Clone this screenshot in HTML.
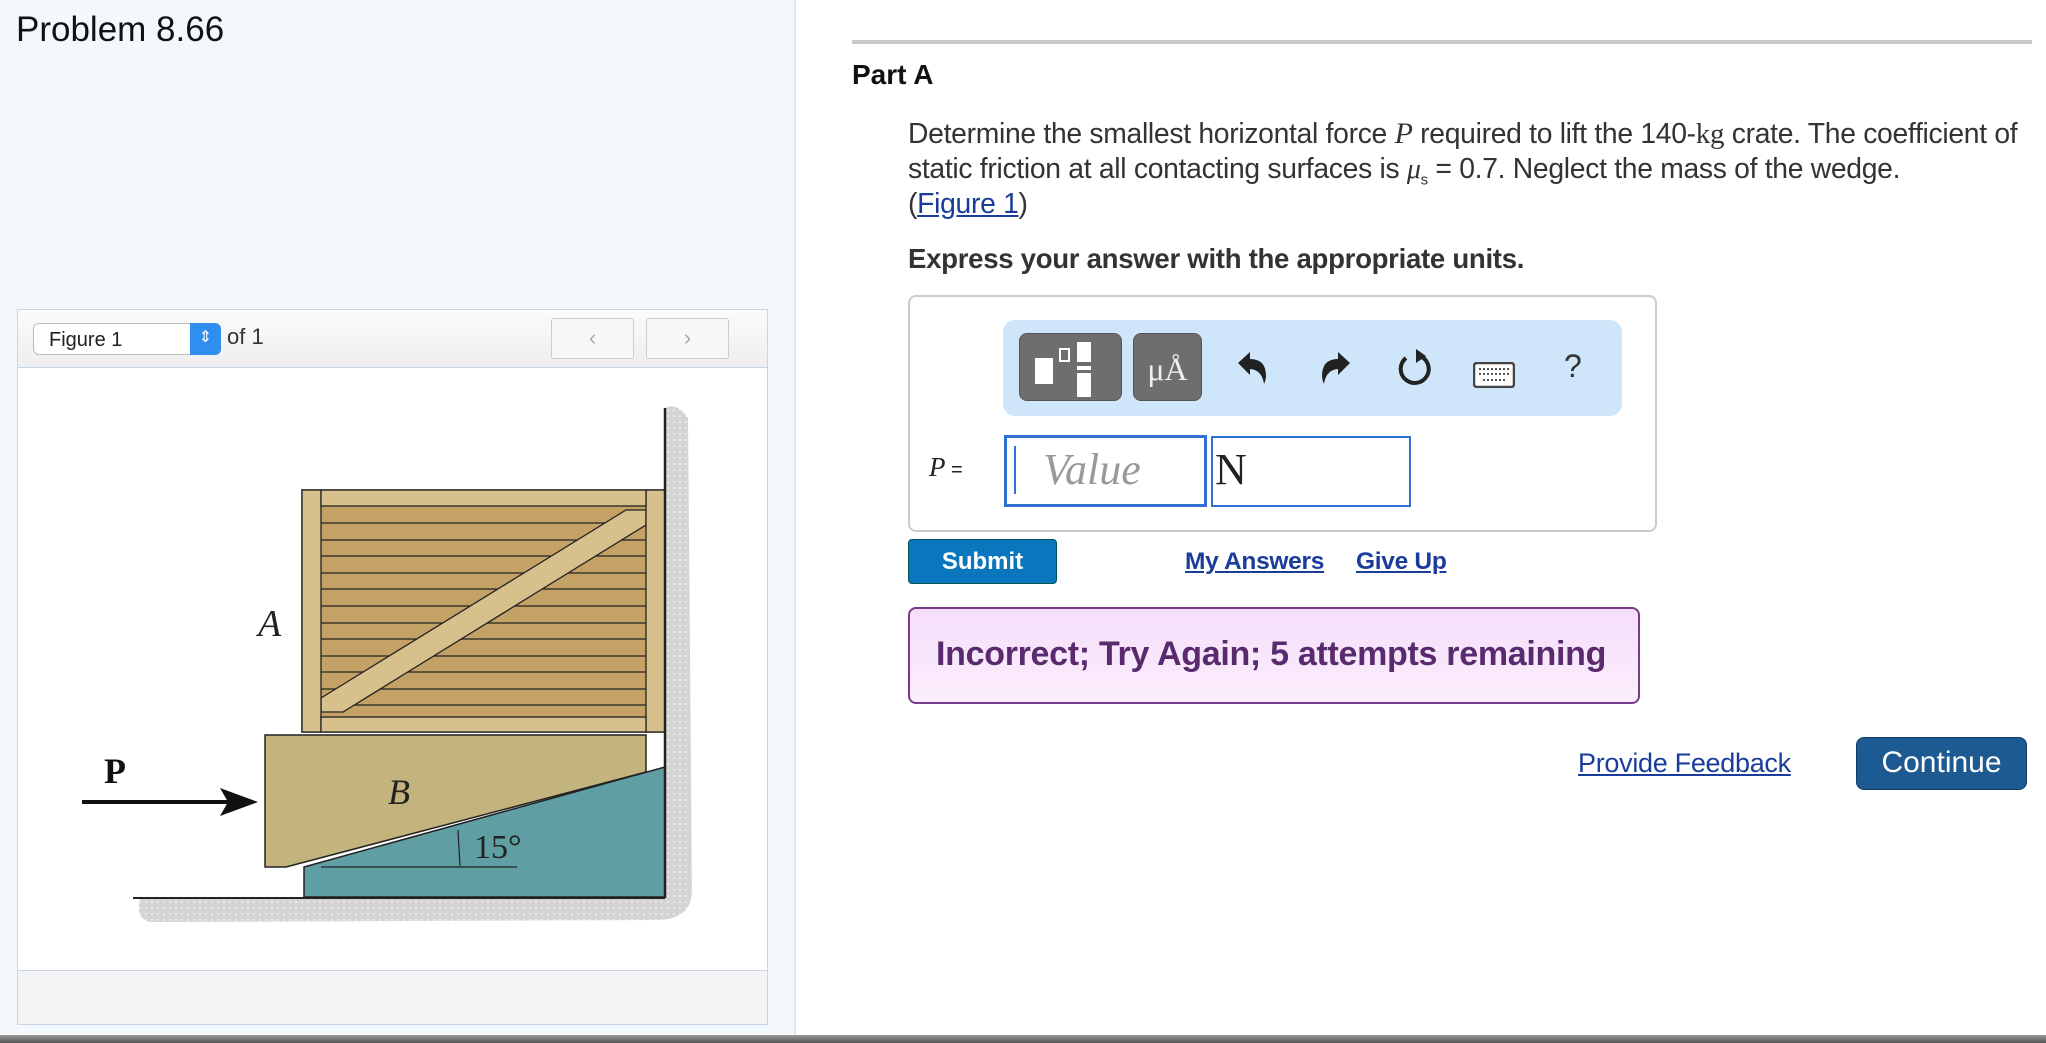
<!DOCTYPE html>
<html><head><meta charset="utf-8"><style>
*{margin:0;padding:0;box-sizing:border-box}
body{width:2046px;height:1043px;position:relative;overflow:hidden;background:#fff;font-family:"Liberation Sans",Arial,sans-serif;color:#222}
.a{position:absolute;white-space:nowrap}
#left{left:0;top:0;width:796px;height:1043px;background:#f3f8fc;border-right:2px solid #dfe7ef}
.lnk{color:#1a3c9a;text-decoration:underline}
.btn{background:#6e6e6e;border-radius:8px;border:1px solid #555}
</style></head><body>
<div class="a" id="left"></div>
<div class="a" style="left:16px;top:10px;font-size:35px;color:#111">Problem 8.66</div>

<div class="a" style="left:17px;top:309px;width:751px;height:716px;background:#fff;border:1px solid #c7d6e6"></div>
<div class="a" style="left:18px;top:310px;width:749px;height:58px;background:linear-gradient(#fbfbfb,#eeeeee);border-bottom:1px solid #c7d6e6"></div>
<div class="a" style="left:33px;top:323px;width:188px;height:32px;background:#fff;border:1px solid #bbb;border-radius:6px;font-size:20px;padding:5px 0 0 15px;color:#222">Figure 1</div>
<div class="a" style="left:190px;top:323px;width:31px;height:32px;background:#2f8ef0;border-radius:0 6px 6px 0;color:#fff;font-size:16px;text-align:center;line-height:30px">⇕</div>
<div class="a" style="left:227px;top:324px;font-size:22px;color:#333">of 1</div>
<div class="a" style="left:551px;top:318px;width:83px;height:41px;border:1px solid #ccc;border-radius:3px;background:#f7f7f7;color:#aaa;font-size:22px;text-align:center;line-height:38px">‹</div>
<div class="a" style="left:646px;top:318px;width:83px;height:41px;border:1px solid #ccc;border-radius:3px;background:#f7f7f7;color:#aaa;font-size:22px;text-align:center;line-height:38px">›</div>
<div class="a" style="left:18px;top:970px;width:749px;height:54px;background:#f4f4f4;border-top:1px solid #c7d6e6"></div>

<svg class="a" style="left:0;top:0" width="800" height="1043">
<defs><pattern id="st" width="6" height="6" patternUnits="userSpaceOnUse"><rect width="6" height="6" fill="#cfcfcf"/><circle cx="2" cy="2" r="1" fill="#eee"/></pattern></defs>
<path d="M665 408 Q677 402 688 418 L692 890 Q692 918 660 920 L150 922 Q135 918 140 899 L665 897 Z" fill="url(#st)" opacity="0.9"/>
<rect x="302" y="490" width="363" height="242" fill="#d8c08c" stroke="#222" stroke-width="1.5"/>
<rect x="321" y="506" width="325" height="211" fill="#c4a265" stroke="#222" stroke-width="1"/>
<g stroke="#222" stroke-width="1.3">
<line x1="321" y1="523" x2="646" y2="523"/><line x1="321" y1="540" x2="646" y2="540"/><line x1="321" y1="556" x2="646" y2="556"/><line x1="321" y1="573" x2="646" y2="573"/><line x1="321" y1="589" x2="646" y2="589"/><line x1="321" y1="606" x2="646" y2="606"/><line x1="321" y1="623" x2="646" y2="623"/><line x1="321" y1="639" x2="646" y2="639"/><line x1="321" y1="656" x2="646" y2="656"/><line x1="321" y1="672" x2="646" y2="672"/><line x1="321" y1="689" x2="646" y2="689"/><line x1="321" y1="705" x2="646" y2="705"/>
</g>
<polygon points="321,698 626,510 646,510 646,525 343,712 321,712" fill="#d8c08c" stroke="#222" stroke-width="1.3"/>
<rect x="302" y="490" width="19" height="242" fill="#d8c08c" stroke="#222" stroke-width="1.3"/>
<rect x="646" y="490" width="19" height="242" fill="#d8c08c" stroke="#222" stroke-width="1.3"/>
<rect x="321" y="490" width="325" height="16" fill="#d8c08c" stroke="#222" stroke-width="1.3"/>
<rect x="321" y="717" width="325" height="15" fill="#d8c08c" stroke="#222" stroke-width="1.3"/>
<polygon points="304,867 665,767 665,897 304,897" fill="#5f9ea3" stroke="#222" stroke-width="1.5"/>
<polygon points="265,735 646,735 646,772 286,867 265,867" fill="#c2b47c" stroke="#222" stroke-width="1.5"/>
<line x1="665" y1="408" x2="665" y2="898" stroke="#222" stroke-width="2.5"/>
<line x1="133" y1="898" x2="665" y2="898" stroke="#222" stroke-width="2"/>
<line x1="321" y1="867" x2="517" y2="867" stroke="#222" stroke-width="1.2"/>
<line x1="458" y1="830" x2="460" y2="866" stroke="#222" stroke-width="1.2"/>
<line x1="82" y1="802" x2="240" y2="802" stroke="#111" stroke-width="4"/>
<polygon points="258,802 220,788 228,802 220,816" fill="#111"/>
<text x="104" y="783" font-family="Liberation Serif" font-weight="bold" font-size="36" fill="#111">P</text>
<text x="258" y="636" font-family="Liberation Serif" font-style="italic" font-size="38" fill="#222">A</text>
<text x="388" y="804" font-family="Liberation Serif" font-style="italic" font-size="36" fill="#222">B</text>
<text x="474" y="858" font-family="Liberation Serif" font-size="34" fill="#222">15°</text>
</svg>

<div class="a" style="left:852px;top:40px;width:1180px;height:4px;background:#c8c8c8"></div>
<div class="a" style="left:852px;top:59px;font-size:28px;font-weight:bold;color:#111">Part A</div>
<div class="a" style="left:908px;top:116px;font-size:28.3px;line-height:35px;color:#333;letter-spacing:-0.3px">Determine the smallest horizontal force <i style="font-family:'Liberation Serif';font-size:30px;line-height:0">P</i> required to lift the 140-<span style="font-family:'Liberation Serif';font-size:29px;line-height:0">kg</span> crate. The coefficient of<br>static friction at all contacting surfaces is <i style="font-family:'Liberation Serif';font-size:28px;line-height:0">μ</i><sub style="font-size:15px;line-height:0">s</sub> = 0.7. Neglect the mass of the wedge.<br>(<span class="lnk">Figure 1</span>)</div>
<div class="a" style="left:908px;top:243px;font-size:27.6px;font-weight:bold;color:#333;letter-spacing:-0.3px">Express your answer with the appropriate units.</div>

<div class="a" style="left:908px;top:295px;width:749px;height:237px;border:2px solid #ccc;border-radius:8px;background:#fff"></div>
<div class="a" style="left:1003px;top:320px;width:619px;height:96px;background:#cfe6fa;border-radius:12px"></div>
<div class="a btn" style="left:1019px;top:333px;width:103px;height:68px"></div>
<svg class="a" style="left:1019px;top:333px" width="103" height="68"><rect x="16" y="25" width="18" height="26" fill="#fff"/><rect x="41" y="16" width="9" height="12" fill="none" stroke="#fff" stroke-width="2"/><rect x="58" y="9" width="14" height="20" fill="#fff"/><rect x="58" y="33" width="14" height="4" fill="#fff"/><rect x="58" y="40" width="14" height="24" fill="#fff"/></svg>
<div class="a btn" style="left:1133px;top:333px;width:69px;height:68px;color:#eee;font-family:'Liberation Serif';font-size:32px;text-align:center;line-height:70px">μÅ</div>
<svg class="a" style="left:1236px;top:350px" width="36" height="36"><path d="M2 13 L14 2 L14 9 Q30 9 30 26 Q30 30 28 34 Q26 20 14 19 L14 25 Z" fill="#222"/></svg>
<svg class="a" style="left:1316px;top:350px" width="36" height="36"><path d="M34 13 L22 2 L22 9 Q6 9 6 26 Q6 30 8 34 Q10 20 22 19 L22 25 Z" fill="#222"/></svg>
<svg class="a" style="left:1396px;top:348px" width="38" height="40"><path d="M24 8 A14 14 0 1 1 10 10" fill="none" stroke="#222" stroke-width="4"/><path d="M20 1 L30 8 L20 15 Z" fill="#222"/></svg>
<svg class="a" style="left:1473px;top:362px" width="42" height="26"><rect x="1" y="1" width="40" height="24" rx="3" fill="#fff" stroke="#444" stroke-width="2.5"/><path d="M6 7h30M6 12h30M10 18h22" stroke="#555" stroke-width="2" stroke-dasharray="2 2"/></svg>
<div class="a" style="left:1564px;top:348px;font-size:32px;color:#333">?</div>
<div class="a" style="left:929px;top:452px;font-family:'Liberation Serif';font-style:italic;font-size:27px;color:#222">P<span style="font-style:normal;font-family:'Liberation Sans';font-size:20px"> =</span></div>
<div class="a" style="left:1004px;top:435px;width:203px;height:72px;border:3px solid #2f6fd0;background:#fff"></div>
<div class="a" style="left:1014px;top:446px;width:2px;height:48px;background:#2f6fd0"></div>
<div class="a" style="left:1043px;top:444px;font-family:'Liberation Serif';font-style:italic;font-size:44px;color:#999">Value</div>
<div class="a" style="left:1211px;top:436px;width:200px;height:71px;border:2px solid #2f6fd0;background:#fff"></div>
<div class="a" style="left:1215px;top:444px;font-family:'Liberation Serif';font-size:44px;color:#222">N</div>

<div class="a" style="left:908px;top:539px;width:149px;height:45px;background:#0a76bd;border:1px solid #055;border-radius:4px;color:#fff;font-weight:bold;font-size:24px;text-align:center;line-height:43px">Submit</div>
<div class="a lnk" style="left:1185px;top:548px;font-weight:bold;font-size:24.5px;letter-spacing:-0.3px">My Answers</div>
<div class="a lnk" style="left:1356px;top:548px;font-weight:bold;font-size:24.5px;letter-spacing:-0.3px">Give Up</div>

<div class="a" style="left:908px;top:607px;width:732px;height:97px;border:2px solid #7a3b8a;border-radius:8px;background:linear-gradient(#f5defa,#fbeefd)"></div>
<div class="a" style="left:936px;top:635px;font-weight:bold;font-size:34px;color:#5a2a6e;letter-spacing:-0.3px">Incorrect; Try Again; 5 attempts remaining</div>

<div class="a lnk" style="left:1578px;top:748px;font-size:27px;letter-spacing:-0.3px">Provide Feedback</div>
<div class="a" style="left:1856px;top:737px;width:171px;height:53px;background:#1e5a92;border:1px solid #0f3c66;border-radius:8px;color:#fff;font-size:30px;text-align:center;line-height:50px">Continue</div>

<div class="a" style="left:0;top:1035px;width:2046px;height:8px;background:linear-gradient(#9a9a9a,#555)"></div>
</body></html>
